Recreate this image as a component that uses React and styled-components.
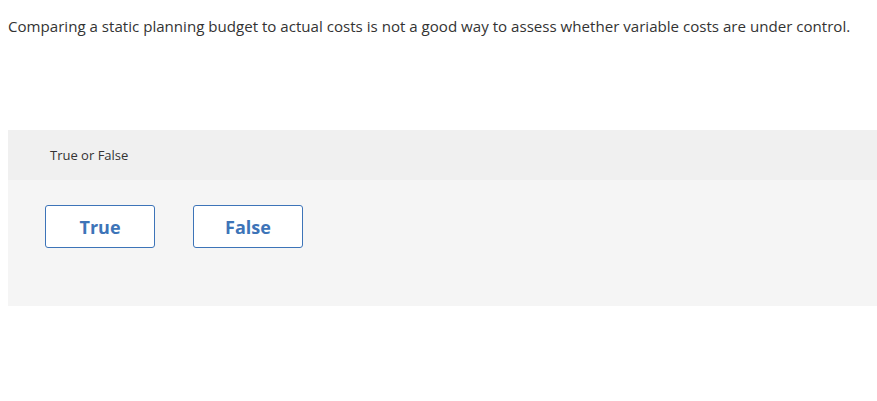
import React from "react";
import styled, { createGlobalStyle } from "styled-components";

const Global = createGlobalStyle`
  html, body { margin: 0; padding: 0; background: #fff; }
  body { font-family: "Open Sans", "Liberation Sans", sans-serif; color: #333; }
`;

const Page = styled.div`
  padding: 16px 0 0 8px;
`;

const Question = styled.p`
  margin: 0;
  font-size: 15.1px;
  line-height: 20px;
  color: #333;
`;

const Panel = styled.section`
  margin-top: 94px;
  background: #f5f5f5;
  height: 176px;
  display: flex;
  flex-direction: column;
`;

const PanelHeader = styled.div`
  height: 50px;
  background: #f0f0f0;
  display: flex;
  align-items: center;
  padding-left: 42px;
  font-size: 13px;
  color: #333;
`;

const Choices = styled.div`
  display: flex;
  gap: 38px;
  padding: 25px 0 0 37px;
`;

const Choice = styled.button`
  width: 110px;
  height: 43px;
  background: #fff;
  border: 1px solid #3d74b8;
  border-radius: 3px;
  color: #3d74b8;
  font-family: "Open Sans", "Liberation Sans", sans-serif;
  font-weight: 700;
  font-size: 18px;
  cursor: pointer;
  padding: 0;
`;

export default function App() {
  return (
    <>
      <Global />
      <Page>
        <Question>
          Comparing a static planning budget to actual costs is not a good way to assess whether variable costs are under control.
        </Question>
        <Panel>
          <PanelHeader>True or False</PanelHeader>
          <Choices>
            <Choice>True</Choice>
            <Choice>False</Choice>
          </Choices>
        </Panel>
      </Page>
    </>
  );
}
